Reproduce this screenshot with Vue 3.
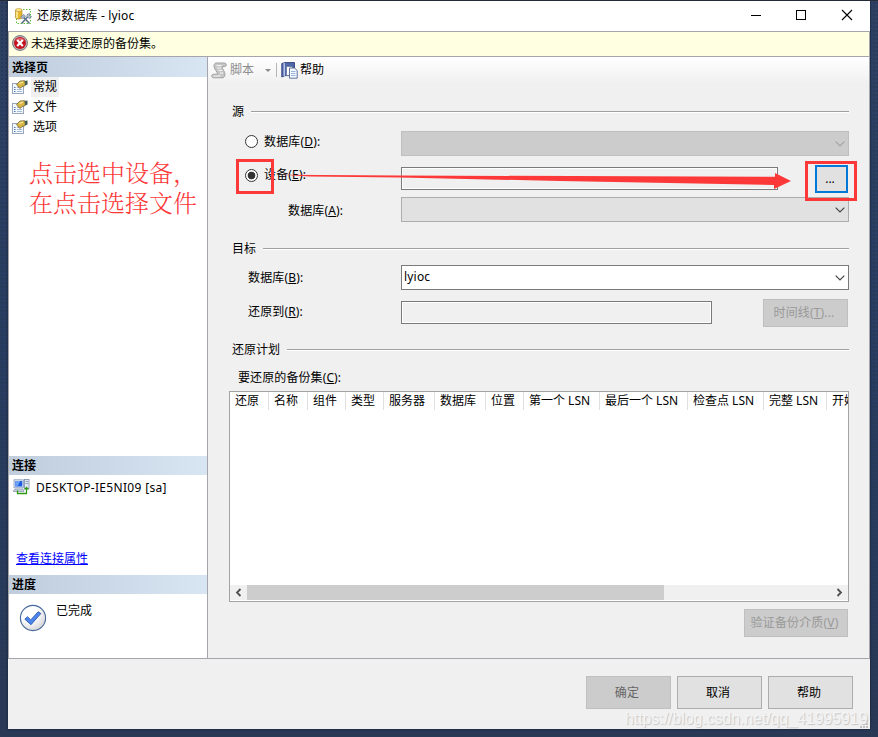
<script setup>
const pages = ['常规', '文件', '选项']
const columns = [
  { t: '还原', w: 39 }, { t: '名称', w: 39 }, { t: '组件', w: 38 }, { t: '类型', w: 38 },
  { t: '服务器', w: 51 }, { t: '数据库', w: 51 }, { t: '位置', w: 38 }, { t: '第一个 LSN', w: 76 },
  { t: '最后一个 LSN', w: 88 }, { t: '检查点 LSN', w: 76 }, { t: '完整 LSN', w: 63 }, { t: '开始日期', w: 76 },
]
</script>

<template>
  <div class="desktop">
    <div class="window">
      <header class="title">
        <svg class="app-icon" width="17" height="17" viewBox="0 0 17 17">
          <path d="M8 1.500H15.500V15.500H1.500V11" fill="none" stroke="#5cc23a" stroke-dasharray="1.500 1.500" />
          <path d="M.5 2v7.500c0 2 6.500 2 6.500 0V2z" fill="#e5b62e" stroke="#a87d16" stroke-width=".6" />
          <path d="M2 3v7" stroke="#fff0a8" stroke-width="1.500" />
          <ellipse cx="3.750" cy="2" rx="3.250" ry="1.500" fill="#ffe98c" stroke="#b38a22" stroke-width=".6" />
          <path d="M6.500 15.500L13 8.500M8 8.500l6.500 7" stroke="#5f7388" stroke-width="1.700" />
          <path d="M5.500 9l3-2.500 2 1.500-2.500 3z" fill="#a5b4c5" stroke="#66788d" stroke-width=".6" />
          <path d="M12 9V6.500l2.500-1v2.500l2 .5-1.500 2z" fill="#b5c2d0" stroke="#5a6c82" stroke-width=".6" />
        </svg>
        <span class="title-text">还原数据库 - lyioc</span>
        <svg class="winbtns" width="105" height="12" viewBox="0 0 105 12">
          <path d="M1 6.500h10" stroke="#000" />
          <rect x="46.500" y="1.500" width="9" height="9" fill="none" stroke="#000" />
          <path d="M92 1l10 10M102 1L92 11" stroke="#000" stroke-width="1.100" />
        </svg>
      </header>

      <div class="alert">
        <svg width="16" height="16" viewBox="0 0 16 16">
          <circle cx="8" cy="8" r="7.500" fill="#b9b3b3" stroke="#77777b" stroke-width=".9" />
          <circle cx="8" cy="8" r="6" fill="#c31420" />
          <path d="M3.200 5.500a5.500 5.500 0 0 1 9.600 0" fill="#e0616a" />
          <path d="M5.200 5l5.600 6M10.800 5l-5.600 6" stroke="#fff" stroke-width="2.200" />
        </svg>
        <span>未选择要还原的备份集。</span>
      </div>

      <div class="body">
        <aside class="side">
          <h3 class="head">选择页</h3>
          <ul class="pages">
            <li v-for="(p, i) in pages" :key="p">
              <svg width="16" height="15" viewBox="0 0 16 15">
                <rect x=".5" y="3.500" width="11" height="10" fill="#f4f8fd" stroke="#97a6ba" />
                <path d="M2 7.500h1.500M2 9.500h1.500M2 11.500h1.500" stroke="#4a78b8" />
                <path d="M5 7.500h5M5 9.500h5M5 11.500h5" stroke="#a5bbd8" />
                <path d="M4.500 4.500L8 1l4.500-.3 2 1.800-2 3.500-2.500.5L8 8.500 6.500 7z" fill="#d9b545" stroke="#75653a" stroke-width=".8" />
                <path d="M7.500 3.500l3.500-1.500" stroke="#fff0a0" stroke-width="1.300" />
                <path d="M12.500 1l3-.5v4l-2.500 1z" fill="#3f5a52" />
              </svg>
              <span :class="{ active: i === 0 }">{{ p }}</span>
            </li>
          </ul>
          <h3 class="head">连接</h3>
          <div class="conn">
            <div class="server">
              <svg width="17" height="16" viewBox="0 0 17 16">
                <rect x="1" y=".8" width="9.500" height="8" fill="#dbe4f3" stroke="#8a9bbd" stroke-width=".8" />
                <rect x="2.300" y="2" width="7" height="5.500" fill="#1e5ce0" />
                <path d="M2.300 2h5l-3 5.500h-2z" fill="#6ca0fa" />
                <path d="M2 10h8l1 2.500H0z" fill="#c5cedc" stroke="#8492ac" stroke-width=".7" />
                <rect x="11.500" y=".5" width="4.500" height="9" fill="#e3e9f4" stroke="#7989a8" stroke-width=".8" />
                <path d="M12.500 2.500h2.500M12.500 4.500h2.500" stroke="#8da0c0" />
                <path d="M4.500 11.500v3H13.500V9" fill="none" stroke="#2f9a16" stroke-width="1.300" />
                <path d="M10.800 10.500L13.500 7.500l2.700 3z" fill="#2f9a16" />
              </svg>
              <span>DESKTOP-IE5NI09 [sa]</span>
            </div>
            <a class="link">查看连接属性</a>
          </div>
          <h3 class="head">进度</h3>
          <div class="progress">
            <svg width="28" height="28" viewBox="0 0 28 28">
              <defs>
                <radialGradient id="ball" cx=".35" cy=".3" r=".8">
                  <stop offset=".4" stop-color="#fff" /><stop offset="1" stop-color="#cfcfd3" />
                </radialGradient>
              </defs>
              <circle cx="14" cy="14" r="12.600" fill="url(#ball)" stroke="#47699b" stroke-width="1.100" />
              <path d="M5.800 15.200l2.700-2.400 3.200 3.100 7.500-8.200 2.600 1.900L12 20.700z" fill="#4a86ee" stroke="#2c56ad" stroke-width=".9" />
            </svg>
            <span>已完成</span>
          </div>
        </aside>

        <main class="main">
          <div class="toolbar">
            <svg width="17" height="17" viewBox="0 0 17 17">
              <path d="M5 1h8.500c2.200 0 2.500 3.500.3 3.500H11.500c-1 2.500 3 5 2.500 8.500-.3 2-1.500 2.800-3 2.800H2.500c-2.300 0-2.300-3.500 0-3.500h4C7 10 2.500 7 3 3.500 3.200 2 4 1 5 1z" fill="#c6c6c6" stroke="#a2a2a2" />
              <path d="M5.500 3.500h5M6 6h4M7.500 8.500h4M9 11h3M2.500 14h7" stroke="#f3f3f3" />
            </svg>
            <span class="script">脚本</span>
            <i class="tri"></i><i class="sep"></i>
            <svg class="book" width="17" height="17" viewBox="0 0 17 17">
              <path d="M.8 1.500L4 .6h9.500v13H4L.8 15z" fill="#5267a8" stroke="#2e3d7a" stroke-width=".9" />
              <path d="M3.200 1v13" stroke="#c9d3f2" stroke-width="1.300" />
              <path d="M5.500 4.500h5l2 2v7h-7z" fill="#fff" stroke="#66769a" stroke-width=".8" />
              <path d="M8.500 6h5l2.700 2.500v7.700H8.500z" fill="#f4f8ff" stroke="#53658f" stroke-width=".9" />
              <path d="M10 9.500h4.500M10 11.500h4.500M10 13.500h4.500" stroke="#83a0cf" stroke-width=".8" />
            </svg>
            <span>帮助</span>
          </div>

          <div class="group g1"><span>源</span><i></i></div>
          <div class="row r-d">
            <label class="lab radio"><b></b><span>数据库(<u>D</u>):</span></label>
            <div class="combo disabled"><svg width="10" height="6" viewBox="0 0 10 6"><path d="M.7.7L5 5 9.300.7" /></svg></div>
          </div>
          <div class="row r-e">
            <label class="lab radio on"><b></b><span>设备(<u>E</u>):</span></label>
            <div class="box wide"></div>
            <button class="btn browse">...</button>
          </div>
          <div class="row r-a">
            <label class="lab deep">数据库(<u>A</u>):</label>
            <div class="combo gray"><svg width="10" height="6" viewBox="0 0 10 6"><path d="M.7.7L5 5 9.300.7" /></svg></div>
          </div>

          <div class="group g2"><span>目标</span><i></i></div>
          <div class="row r-b">
            <label class="lab">数据库(<u>B</u>):</label>
            <div class="combo"><span>lyioc</span><svg width="10" height="6" viewBox="0 0 10 6"><path d="M.7.7L5 5 9.300.7" /></svg></div>
          </div>
          <div class="row r-r">
            <label class="lab">还原到(<u>R</u>):</label>
            <div class="box"></div>
            <button class="btn off timeline">时间线(<u>T</u>)...</button>
          </div>

          <div class="group g3"><span>还原计划</span><i></i></div>
          <div class="caption">要还原的备份集(<u>C</u>):</div>
          <div class="grid">
            <div class="cols">
              <span v-for="c in columns" :key="c.t" :style="{ width: c.w + 'px' }">{{ c.t }}</span>
            </div>
            <div class="scroll">
              <svg width="17" height="15" viewBox="0 0 17 15"><path d="M10.500 4L7 7.500l3.500 3.500" /></svg>
              <div class="track"><div class="thumb"></div></div>
              <svg width="17" height="15" viewBox="0 0 17 15"><path d="M6.500 4L10 7.500 6.500 11" /></svg>
            </div>
          </div>
          <button class="btn off verify">验证备份介质(<u>V</u>)</button>
        </main>
      </div>

      <footer class="foot">
        <button class="btn off ok">确定</button>
        <button class="btn">取消</button>
        <button class="btn">帮助</button>
      </footer>
    </div>

    <svg class="marks" width="878" height="737" viewBox="0 0 878 737">
      <g fill="#c0c0c0">
        <rect x="866" y="720" width="2" height="2" /><rect x="863" y="723" width="2" height="2" /><rect x="866" y="723" width="2" height="2" />
        <rect x="860" y="726" width="2" height="2" /><rect x="863" y="726" width="2" height="2" /><rect x="866" y="726" width="2" height="2" />
      </g>
      <g fill="none" stroke="#fd3838" stroke-width="3">
        <rect x="237.500" y="160.500" width="35" height="32" />
        <rect x="806.500" y="162.500" width="49" height="37" />
      </g>
      <path d="M281 174.700L400 175.500 775 176.800V173l16 8-17 8v-4L560 181 400 177.500 310 176.500z" fill="#fd3838" />
    </svg>
    <div class="note">点击选中设备，<br />在点击选择文件</div>
    <div class="watermark">https://blog.csdn.net/qq_41995919</div>
  </div>
</template>

<style>
body { margin: 0; overflow: hidden; }
</style>

<style scoped>
* { box-sizing: border-box; }
.desktop {
  position: relative; width: 878px; height: 737px; padding: 0 8px 8px; overflow: hidden;
  background: radial-gradient(#263853 0.6px, transparent 1px) 0 0 / 4px 4px, linear-gradient(#2e4165, #283d62 50%, #293956);
  font: 12px/16px "Noto Sans", "Noto Sans CJK SC", sans-serif; color: #000;
  border-top: 1px solid #242a38;
}
.window { width: 862px; height: 728px; background: #f0f0f0; display: flex; flex-direction: column; box-shadow: 0 0 2px #111a2a; }
.title { height: 30px; background: #fff; display: flex; align-items: center; padding: 0 15px 0 7px; flex: none; }
.title-text { margin-left: 5px; flex: 1; padding-bottom: 1px; letter-spacing: .15px; }
.winbtns { margin-bottom: 2px; }
.alert { height: 26px; flex: none; background: #ffffe1; border: 1px solid #a5a5ab; display: flex; align-items: center; padding-left: 3px; gap: 3px; }
.alert svg { margin-bottom: 2px; }
.body { height: 602px; flex: none; display: flex; border: 1px solid #a5a5ab; border-top: 0; }
.side { width: 199px; flex: none; background: #fff; border-right: 1px solid #a5a5ab; }
.head { margin: 0; height: 19px; padding-left: 3px; font-size: 12px; line-height: 20px; font-weight: 700; background: linear-gradient(90deg, #bfcddc, #d8e5f3); }
.head:first-child { height: 20px; line-height: 21px; }
.pages { list-style: none; margin: 0; padding: 0 0 0 3px; height: 379px; }
.pages li { height: 20px; display: flex; align-items: center; gap: 3px; }
.pages span { padding: 0 2px; line-height: 20px; }
.active { background: #f0f0f0; }
.conn { height: 100px; }
.server { display: flex; align-items: center; gap: 6px; padding: 3px 0 0 4px; }
.server span { padding-top: 2px; white-space: nowrap; letter-spacing: .32px; }
.link { display: block; margin: 55px 0 0 7px; color: #00f; text-decoration: underline; }
.progress { display: flex; padding: 10px 0 0 10px; gap: 9px; }
.progress span { margin-top: -1px; }
.main { flex: 1; min-width: 0; padding-right: 20px; display: flex; flex-direction: column; background: linear-gradient(#fff, #f0f0f0 27px); }
.toolbar { height: 26px; display: flex; align-items: center; padding-left: 3px; flex: none; }
.script { color: #8c8c8c; margin-left: 2px; }
.tri { border: 3px solid transparent; border-top-color: #8c8c8c; border-bottom: 0; margin-left: 11px; }
.sep { width: 1px; height: 14px; background: #b5b5b5; margin: 0 4px 0 5px; }
.book { margin-right: 2px; }
.group { height: 20px; flex: none; display: flex; align-items: center; gap: 7px; padding-left: 24px; }
.group i { flex: 1; height: 2px; border-top: 1px solid #a0a0a0; background: #fff; }
.g1 { margin-top: 19px; }
.g2 { margin-top: 17px; }
.g3 { margin-top: 13px; }
.row { flex: none; display: flex; align-items: center; }
.lab { width: 193px; flex: none; padding-left: 40px; letter-spacing: .15px; }
.deep { padding-left: 80px; padding-top: 2px; }
.radio { padding-left: 37px; display: flex; align-items: center; padding-bottom: 4px; }
.radio.on { padding-bottom: 8px; }
.radio b { width: 13px; height: 13px; border: 1px solid #333; border-radius: 50%; background: #fff; margin-right: 6px; }
.radio.on b { background: radial-gradient(circle, #333 3.500px, #fff 4.200px); }
.r-d { height: 25px; margin-top: 9px; }
.r-e { height: 28px; margin-top: 9px; }
.r-a { height: 25px; margin-top: 4px; }
.r-b { height: 25px; margin-top: 6px; }
.r-r { height: 28px; margin-top: 9px; }
.r-r .lab { padding-bottom: 2px; }
.combo { flex: 1; height: 25px; border: 1px solid #7a7a7a; background: #fff; display: flex; align-items: center; justify-content: flex-end; padding: 0 3px 0 2px; }
.combo span { flex: 1; padding-bottom: 2px; letter-spacing: .2px; }
.combo path { fill: none; stroke: #444; stroke-width: 1.200; }
.combo.disabled { background: #ccc; border-color: #bfbfbf; }
.disabled path { stroke: #a3a3a3; }
.combo.gray { background: #e1e1e1; border-color: #adadad; }
.box { width: 311px; height: 23px; border: 1px solid #7a7a7a; background: #f0f0f0; box-shadow: inset 0 0 0 1px #fff; margin-bottom: 1px; }
.box.wide { width: 377px; }
.btn { font: inherit; color: #000; background: #e1e1e1; border: 1px solid #adadad; padding: 0 3px 0 0; text-align: center; white-space: nowrap; }
.btn.off { background: #ccc; border-color: #bfbfbf; color: #999; letter-spacing: .15px; }
.btn.off.ok { color: #666; }
.browse { width: 33px; height: 28px; margin-left: 37px; border: 2px solid #0078d7; }
.timeline { width: 85px; height: 28px; margin-left: 51px; }
.caption { height: 20px; line-height: 20px; margin-top: 8px; padding-left: 30px; flex: none; letter-spacing: .1px; }
.grid { flex: none; margin: 3px 0 0 21px; height: 211px; border: 1px solid #a3a3a7; background: #fff; display: flex; flex-direction: column; overflow: hidden; }
.cols { display: flex; height: 18px; }
.cols span { flex: none; border-right: 1px solid #e0e0e0; padding-left: 5px; line-height: 18px; white-space: nowrap; overflow: hidden; }
.scroll { margin: auto 0 1px; height: 15px; display: flex; background: #f0f0f0; }
.scroll path { fill: none; stroke: #505050; stroke-width: 1.800; }
.track { flex: 1; }
.thumb { width: 417px; height: 15px; background: #cdcdcd; }
.verify { width: 104px; height: 28px; margin: 7px 1px 0 auto; flex: none; }
.foot { display: flex; justify-content: flex-end; gap: 6px; padding: 17px 17px 0 0; }
.foot .btn { width: 85px; height: 33px; }
.marks { position: absolute; left: 0; top: -1px; }
.note { position: absolute; left: 29px; top: 156px; color: #fd3838; font: 300 24px/30px "Noto Serif CJK SC", "Noto Sans CJK SC", serif; white-space: nowrap; }
.watermark { position: absolute; left: 625px; top: 708px; font: 15.800px/20px "Liberation Sans", sans-serif; color: #f4f4f4; text-shadow: 1px 1px 1px #c4c4c4; white-space: nowrap; }
</style>
